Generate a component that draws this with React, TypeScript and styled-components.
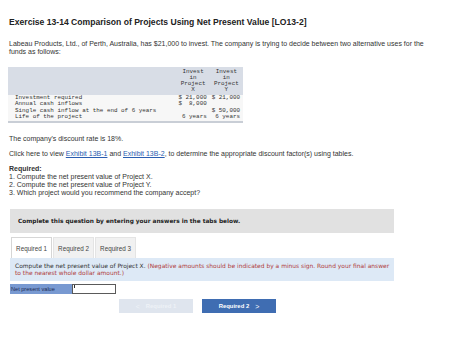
import styled, { createGlobalStyle } from 'styled-components'

const GlobalStyle = createGlobalStyle`
  html, body {
    margin: 0;
    padding: 0;
    background: #ffffff;
  }
  body {
    font-family: 'Liberation Sans', Arial, sans-serif;
    color: #333333;
  }
`

const Page = styled.div`
  width: 474px;
  height: 340px;
  box-sizing: border-box;
  padding: 16px 0 0 9px;
  overflow: hidden;
`

const Title = styled.h1`
  margin: 0;
  font-size: 8.6px;
  line-height: 12px;
  font-weight: bold;
  color: #222222;
`

const Paragraph = styled.p<{ gap?: number }>`
  margin: ${({ gap }) => gap ?? 0}px 0 0 0;
  width: 430px;
  font-size: 7px;
  line-height: 8.3px;
`

const Link = styled.a`
  color: #2a5db0;
  text-decoration: underline;
`

const DataTable = styled.table`
  margin: 10px 0 0 -1px;
  width: 235px;
  border-collapse: collapse;
  font-family: 'Liberation Mono', 'Courier New', monospace;
  font-size: 5.9px;
  line-height: 6px;
  color: #333333;
  border-bottom: 2px solid #c9ced6;

  th, td {
    padding: 0;
  }
`

const HeadRow = styled.tr`
  background: #d8dde6;
`

const HeadCell = styled.th`
  && {
    padding: 2px 0 2px;
  }
  font-weight: normal;
  text-align: center;
  vertical-align: bottom;
  width: 33px;
`

const BodyRow = styled.tr`
  background: #f7f7f7;
  line-height: 6.5px;
`

const LabelCell = styled.td`
  && {
    padding: 0 0 0 7px;
  }
  text-align: left;
`

const ValueCell = styled.td<{ left?: boolean }>`
  && {
    padding: 0 3px 0 2px;
  }
  text-align: ${({ left }) => (left ? 'left' : 'right')};
  white-space: pre;
`

const Strong = styled.div`
  margin-top: 7px;
  font-size: 7px;
  line-height: 8px;
  font-weight: bold;
`

const List = styled.ol`
  margin: 0;
  padding: 0;
  list-style: none;
  font-size: 7px;
  line-height: 8px;
`

const Notice = styled.div`
  margin: 12px 0 0 1px;
  width: 384px;
  height: 24px;
  box-sizing: border-box;
  padding-left: 8px;
  display: flex;
  align-items: center;
  background: #e1e1e1;
  font-family: 'DejaVu Sans', Verdana, sans-serif;
  font-size: 5.8px;
  font-weight: bold;
  color: #222222;
`

const Tabs = styled.div`
  margin: 4px 0 0 2px;
  display: flex;
  gap: 1px;
`

const Tab = styled.div<{ active?: boolean }>`
  width: 41px;
  height: 21px;
  box-sizing: border-box;
  display: flex;
  align-items: center;
  justify-content: center;
  font-size: 6.3px;
  color: #444444;
  background: ${({ active }) => (active ? '#ffffff' : '#f1f1f1')};
  border: 1px solid ${({ active }) => (active ? '#d6d6d6' : '#e4e4e4')};
  border-bottom: none;
`

const InfoBox = styled.div`
  margin-left: 1px;
  width: 384px;
  height: 23px;
  box-sizing: border-box;
  padding: 4px 4px 0 5px;
  background: #dde9f6;
  font-family: 'DejaVu Sans', Verdana, sans-serif;
  font-size: 5.95px;
  line-height: 7px;
  color: #333333;
`

const Hint = styled.span`
  color: #b03c3c;
`

const AnswerRow = styled.div`
  margin: 3px 0 0 1px;
  display: flex;
  height: 10px;
`

const AnswerLabel = styled.div`
  width: 62px;
  box-sizing: border-box;
  padding-left: 1px;
  display: flex;
  align-items: center;
  background: #7899d1;
  font-size: 5.6px;
  color: #1b2a55;
`

const AnswerInput = styled.div`
  width: 44px;
  box-sizing: border-box;
  background: #ffffff;
  border: 1px solid #5a5a5a;
  position: relative;
  &::before {
    content: '';
    position: absolute;
    left: 1px;
    top: 0;
    width: 1px;
    height: 3px;
    background: #333333;
  }
`

const NavRow = styled.div`
  margin: 5px 0 0 110px;
  display: flex;
  gap: 9px;
`

const NavButton = styled.div<{ disabled?: boolean }>`
  width: 74px;
  height: 14px;
  display: flex;
  align-items: center;
  justify-content: center;
  gap: 6px;
  font-size: 5.9px;
  font-weight: bold;
  color: ${({ disabled }) => (disabled ? '#eef2f7' : '#ffffff')};
  background: ${({ disabled }) => (disabled ? '#dfe5ee' : '#3f6db2')};
`

const Chevron = styled.span`
  font-size: 7px;
  font-weight: normal;
`

const rows = [
  { label: 'Investment required', x: '$ 21,000', y: '$ 21,000' },
  { label: 'Annual cash inflows', x: '$  8,000', y: '' },
  { label: 'Single cash inflow at the end of 6 years', x: '', y: '$ 50,000' },
  { label: 'Life of the project', x: '6 years', y: '6 years' },
]

export default function App() {
  return (
    <>
      <GlobalStyle />
      <Page>
        <Title>
          Exercise 13-14 Comparison of Projects Using Net Present Value [LO13-2]
        </Title>
        <Paragraph gap={12}>
          Labeau Products, Ltd., of Perth, Australia, has $21,000 to invest. The
          company is trying to decide between two alternative uses for the funds
          as follows:
        </Paragraph>

        <DataTable>
          <thead>
            <HeadRow>
              <th />
              <HeadCell>
                Invest
                <br />
                in
                <br />
                Project
                <br />X
              </HeadCell>
              <HeadCell>
                Invest
                <br />
                in
                <br />
                Project
                <br />Y
              </HeadCell>
            </HeadRow>
          </thead>
          <tbody>
            {rows.map((row) => (
              <BodyRow key={row.label}>
                <LabelCell>{row.label}</LabelCell>
                <ValueCell left={row.x.startsWith('$')}>{row.x}</ValueCell>
                <ValueCell>{row.y}</ValueCell>
              </BodyRow>
            ))}
          </tbody>
        </DataTable>

        <Paragraph gap={12}>The company's discount rate is 18%.</Paragraph>
        <Paragraph gap={7}>
          Click here to view <Link>Exhibit 13B-1</Link> and{' '}
          <Link>Exhibit 13B-2</Link>, to determine the appropriate discount
          factor(s) using tables.
        </Paragraph>

        <Strong>Required:</Strong>
        <List>
          <li>1. Compute the net present value of Project X.</li>
          <li>2. Compute the net present value of Project Y.</li>
          <li>3. Which project would you recommend the company accept?</li>
        </List>

        <Notice>
          Complete this question by entering your answers in the tabs below.
        </Notice>

        <Tabs>
          <Tab active>Required 1</Tab>
          <Tab>Required 2</Tab>
          <Tab>Required 3</Tab>
        </Tabs>
        <InfoBox>
          Compute the net present value of Project X.{' '}
          <Hint>
            (Negative amounts should be indicated by a minus sign. Round your
            final answer to the nearest whole dollar amount.)
          </Hint>
        </InfoBox>

        <AnswerRow>
          <AnswerLabel>Net present value</AnswerLabel>
          <AnswerInput />
        </AnswerRow>

        <NavRow>
          <NavButton disabled>
            <Chevron>&lt;</Chevron>
            Required 1
          </NavButton>
          <NavButton>
            Required 2<Chevron>&gt;</Chevron>
          </NavButton>
        </NavRow>
      </Page>
    </>
  )
}
